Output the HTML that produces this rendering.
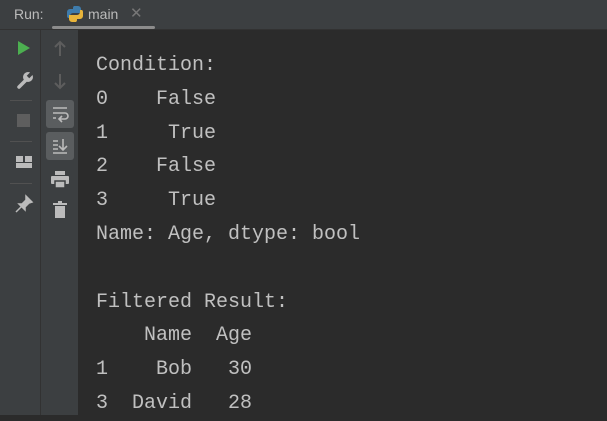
<!DOCTYPE html><html><head><style>
body{margin:0;width:607px;height:415px;overflow:hidden;background:#2b2b2b;font-family:"Liberation Sans",sans-serif;position:relative}
.hdr{position:absolute;left:0;top:0;width:607px;height:29px;background:#3c3f41;border-bottom:1px solid #323232}
.run{position:absolute;left:14px;top:6px;font-size:14px;color:#bbb}
.tab{position:absolute;left:88px;top:6px;font-size:14px;color:#bbb}
.x{position:absolute;left:130px;top:4px;font-size:15px;color:#777}
.ul{position:absolute;left:52px;top:26px;width:103px;height:3px;background:#8c8c8c;border-radius:2px}
.c1{position:absolute;left:0;top:30px;width:40px;height:385px;background:#3c3f41;border-right:1px solid #323232}
.c2{position:absolute;left:41px;top:30px;width:37px;height:385px;background:#3c3f41;border-right:1px solid #2b2b2b}
.sep{position:absolute;left:10px;width:22px;height:1px;background:#515151}
.btn{position:absolute;left:46px;width:28px;height:28px;background:#5a5d5f;border-radius:3px}
pre{position:absolute;left:96px;top:49px;margin:0;font-family:"Liberation Mono",monospace;font-size:20px;line-height:33.8px;color:#c0c0c0}
</style></head><body>
<div class="hdr"></div>
<div class="run">Run:</div>
<svg style="position:absolute;left:66px;top:5px" width="18" height="18"><path d="M8 1h4a3 3 0 0 1 3 3v4H7a3 3 0 0 0-3 3v2H2a2 2 0 0 1-1-2V7a3 3 0 0 1 3-3h3V3a2 2 0 0 1 1-2z" fill="#3f7cac"/><path d="M10 17H6a3 3 0 0 1-3-3v-4h8a3 3 0 0 0 3-3V5h2a2 2 0 0 1 1 2v4a3 3 0 0 1-3 3h-3v1a2 2 0 0 1-1 2z" fill="#e8b43a"/></svg>
<div class="tab">main</div><div class="x">✕</div>
<div class="ul"></div>
<div class="c1"></div><div class="c2"></div>
<svg style="position:absolute;left:17px;top:40px" width="14" height="16"><path d="M1 1L13 8L1 15Z" fill="#4caf50"/></svg>
<svg style="position:absolute;left:15px;top:70px" width="20" height="20"><path d="M4 17L12 9" stroke="#bbb" stroke-width="3.5" stroke-linecap="round"/><circle cx="13" cy="7" r="5" fill="#bbb"/><path d="M13 7L19 1" stroke="#3c3f41" stroke-width="3.5"/></svg>
<div class="sep" style="top:100px"></div>
<div style="position:absolute;left:17px;top:114px;width:13px;height:13px;background:#5e5e5e"></div>
<div class="sep" style="top:141px"></div>
<div style="position:absolute;left:16px;top:156px;width:16px;height:6px;background:#bbb"></div>
<div style="position:absolute;left:16px;top:163px;width:16px;height:5px;background:#bbb"></div>
<div style="position:absolute;left:23px;top:156px;width:2px;height:7px;background:#3c3f41"></div>
<div class="sep" style="top:183px"></div>
<svg style="position:absolute;left:14px;top:194px" width="20" height="20"><path d="M12 2l6 6-3 1-4 4 0 3-6-6 3 0 4-4z M7 13l-5 5" stroke="#bbb" stroke-width="1.5" fill="#bbb"/></svg>
<svg style="position:absolute;left:52px;top:40px" width="16" height="18"><path d="M8 2v14M3 7l5-5 5 5" stroke="#5d5d5d" stroke-width="2" fill="none"/></svg>
<svg style="position:absolute;left:52px;top:72px" width="16" height="18"><path d="M8 2v14M3 11l5 5 5-5" stroke="#5d5d5d" stroke-width="2" fill="none"/></svg>
<div class="btn" style="top:100px"></div>
<svg style="position:absolute;left:50px;top:104px" width="20" height="20"><path d="M3 4h14M3 9h12a3 3 0 0 1 0 6h-5M12 12l-3 3 3 3M3 14h3" stroke="#bbb" stroke-width="1.6" fill="none"/></svg>
<div class="btn" style="top:132px"></div>
<svg style="position:absolute;left:50px;top:136px" width="20" height="20"><path d="M3 5h5M3 9h5M3 13h5M13 3v11M9 10l4 4 4-4M3 17h14" stroke="#bbb" stroke-width="1.6" fill="none"/></svg>
<svg style="position:absolute;left:50px;top:170px" width="20" height="20"><rect x="5" y="1" width="10" height="4" fill="#bbb"/><rect x="1" y="6" width="18" height="8" rx="1" fill="#bbb"/><rect x="5" y="11" width="10" height="7" fill="#bbb" stroke="#3c3f41" stroke-width="1.5"/></svg>
<svg style="position:absolute;left:52px;top:201px" width="16" height="18"><rect x="1" y="2" width="14" height="2" fill="#bbb"/><rect x="6" y="0" width="4" height="2" fill="#bbb"/><rect x="3" y="5" width="10" height="12" fill="#bbb"/></svg>
<pre>Condition:
0    False
1     True
2    False
3     True
Name: Age, dtype: bool

Filtered Result:
    Name  Age
1    Bob   30
3  David   28</pre>
</body></html>
